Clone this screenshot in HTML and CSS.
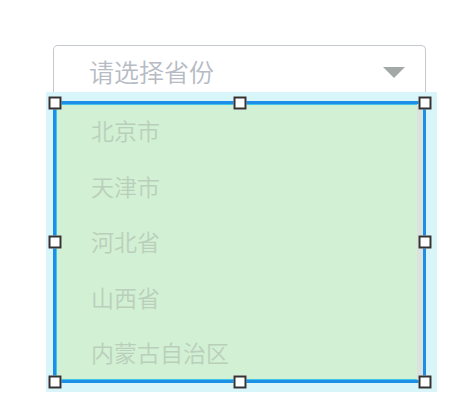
FILE: index.html
```html
<!DOCTYPE html>
<html lang="zh-CN">
<head>
<meta charset="utf-8">
<title>请选择省份</title>
<link rel="stylesheet" href="styles.css">
</head>
<body>
<div class="page">
  <div class="select">
    <span class="placeholder">请选择省份</span>
    <span class="arrow"></span>
  </div>
  <div class="panel">
    <div class="dropdown">
      <div class="list">
        <ul class="items">
          <li>北京市</li>
          <li>天津市</li>
          <li>河北省</li>
          <li>山西省</li>
          <li>内蒙古自治区</li>
        </ul>
        <div class="track"></div>
      </div>
      <span class="handle h-tl"></span>
      <span class="handle h-tc"></span>
      <span class="handle h-tr"></span>
      <span class="handle h-ml"></span>
      <span class="handle h-mr"></span>
      <span class="handle h-bl"></span>
      <span class="handle h-bc"></span>
      <span class="handle h-br"></span>
    </div>
  </div>
</div>
</body>
</html>
```
FILE: styles.css
```css
html, body {
  margin: 0;
  padding: 0;
  background: #ffffff;
}
body {
  font-family: "Noto Sans CJK SC", "Noto Sans", sans-serif;
}
.page {
  padding-top: 45px;
}
.select {
  box-sizing: border-box;
  margin-left: 53px;
  width: 373px;
  height: 47px;
  border: 1px solid #c4c8d0;
  border-bottom: none;
  border-radius: 5px 5px 0 0;
  display: flex;
  align-items: center;
  justify-content: space-between;
  padding: 4px 20px 0 35px;
}
.placeholder {
  font-size: 25px;
  line-height: 30px;
  font-weight: 350;
  color: #b6bbc4;
}
.arrow {
  width: 0;
  height: 0;
  border-left: 11px solid transparent;
  border-right: 11px solid transparent;
  border-top: 11px solid #a3a9a6;
  margin-top: 2px;
}
.panel {
  box-sizing: border-box;
  margin-left: 46px;
  width: 391px;
  height: 300px;
  background: #d8f6fa;
  padding: 9px 11px 9px 7px;
}
.dropdown {
  position: relative;
  box-sizing: border-box;
  width: 373px;
  height: 282px;
  border: 3px solid #1e8fe6;
  box-shadow: inset 0 0 0 1px #3fc6ea;
  background: #d2f0d3;
}
.list {
  display: flex;
  height: 100%;
  overflow: hidden;
}
.items {
  flex: 1;
  list-style: none;
  margin: 0;
  padding: 0 0 0 35px;
}
.items li {
  height: 55.5px;
  line-height: 53px;
  font-size: 23px;
  font-weight: 350;
  color: #bacfbb;
  white-space: nowrap;
}
.track {
  width: 6px;
  background: #dce2dd;
}
.handle {
  position: absolute;
  box-sizing: border-box;
  width: 13px;
  height: 13px;
  background: #ffffff;
  border: 2px solid #333333;
  transform: translate(-50%, -50%);
}
.h-tl { left: -1.5px; top: -1.5px; }
.h-tc { left: 50%; top: -1.5px; }
.h-tr { left: calc(100% + 1.5px); top: -1.5px; }
.h-ml { left: -1.5px; top: 50%; }
.h-mr { left: calc(100% + 1.5px); top: 50%; }
.h-bl { left: -1.5px; top: calc(100% + 1.5px); }
.h-bc { left: 50%; top: calc(100% + 1.5px); }
.h-br { left: calc(100% + 1.5px); top: calc(100% + 1.5px); }
```
